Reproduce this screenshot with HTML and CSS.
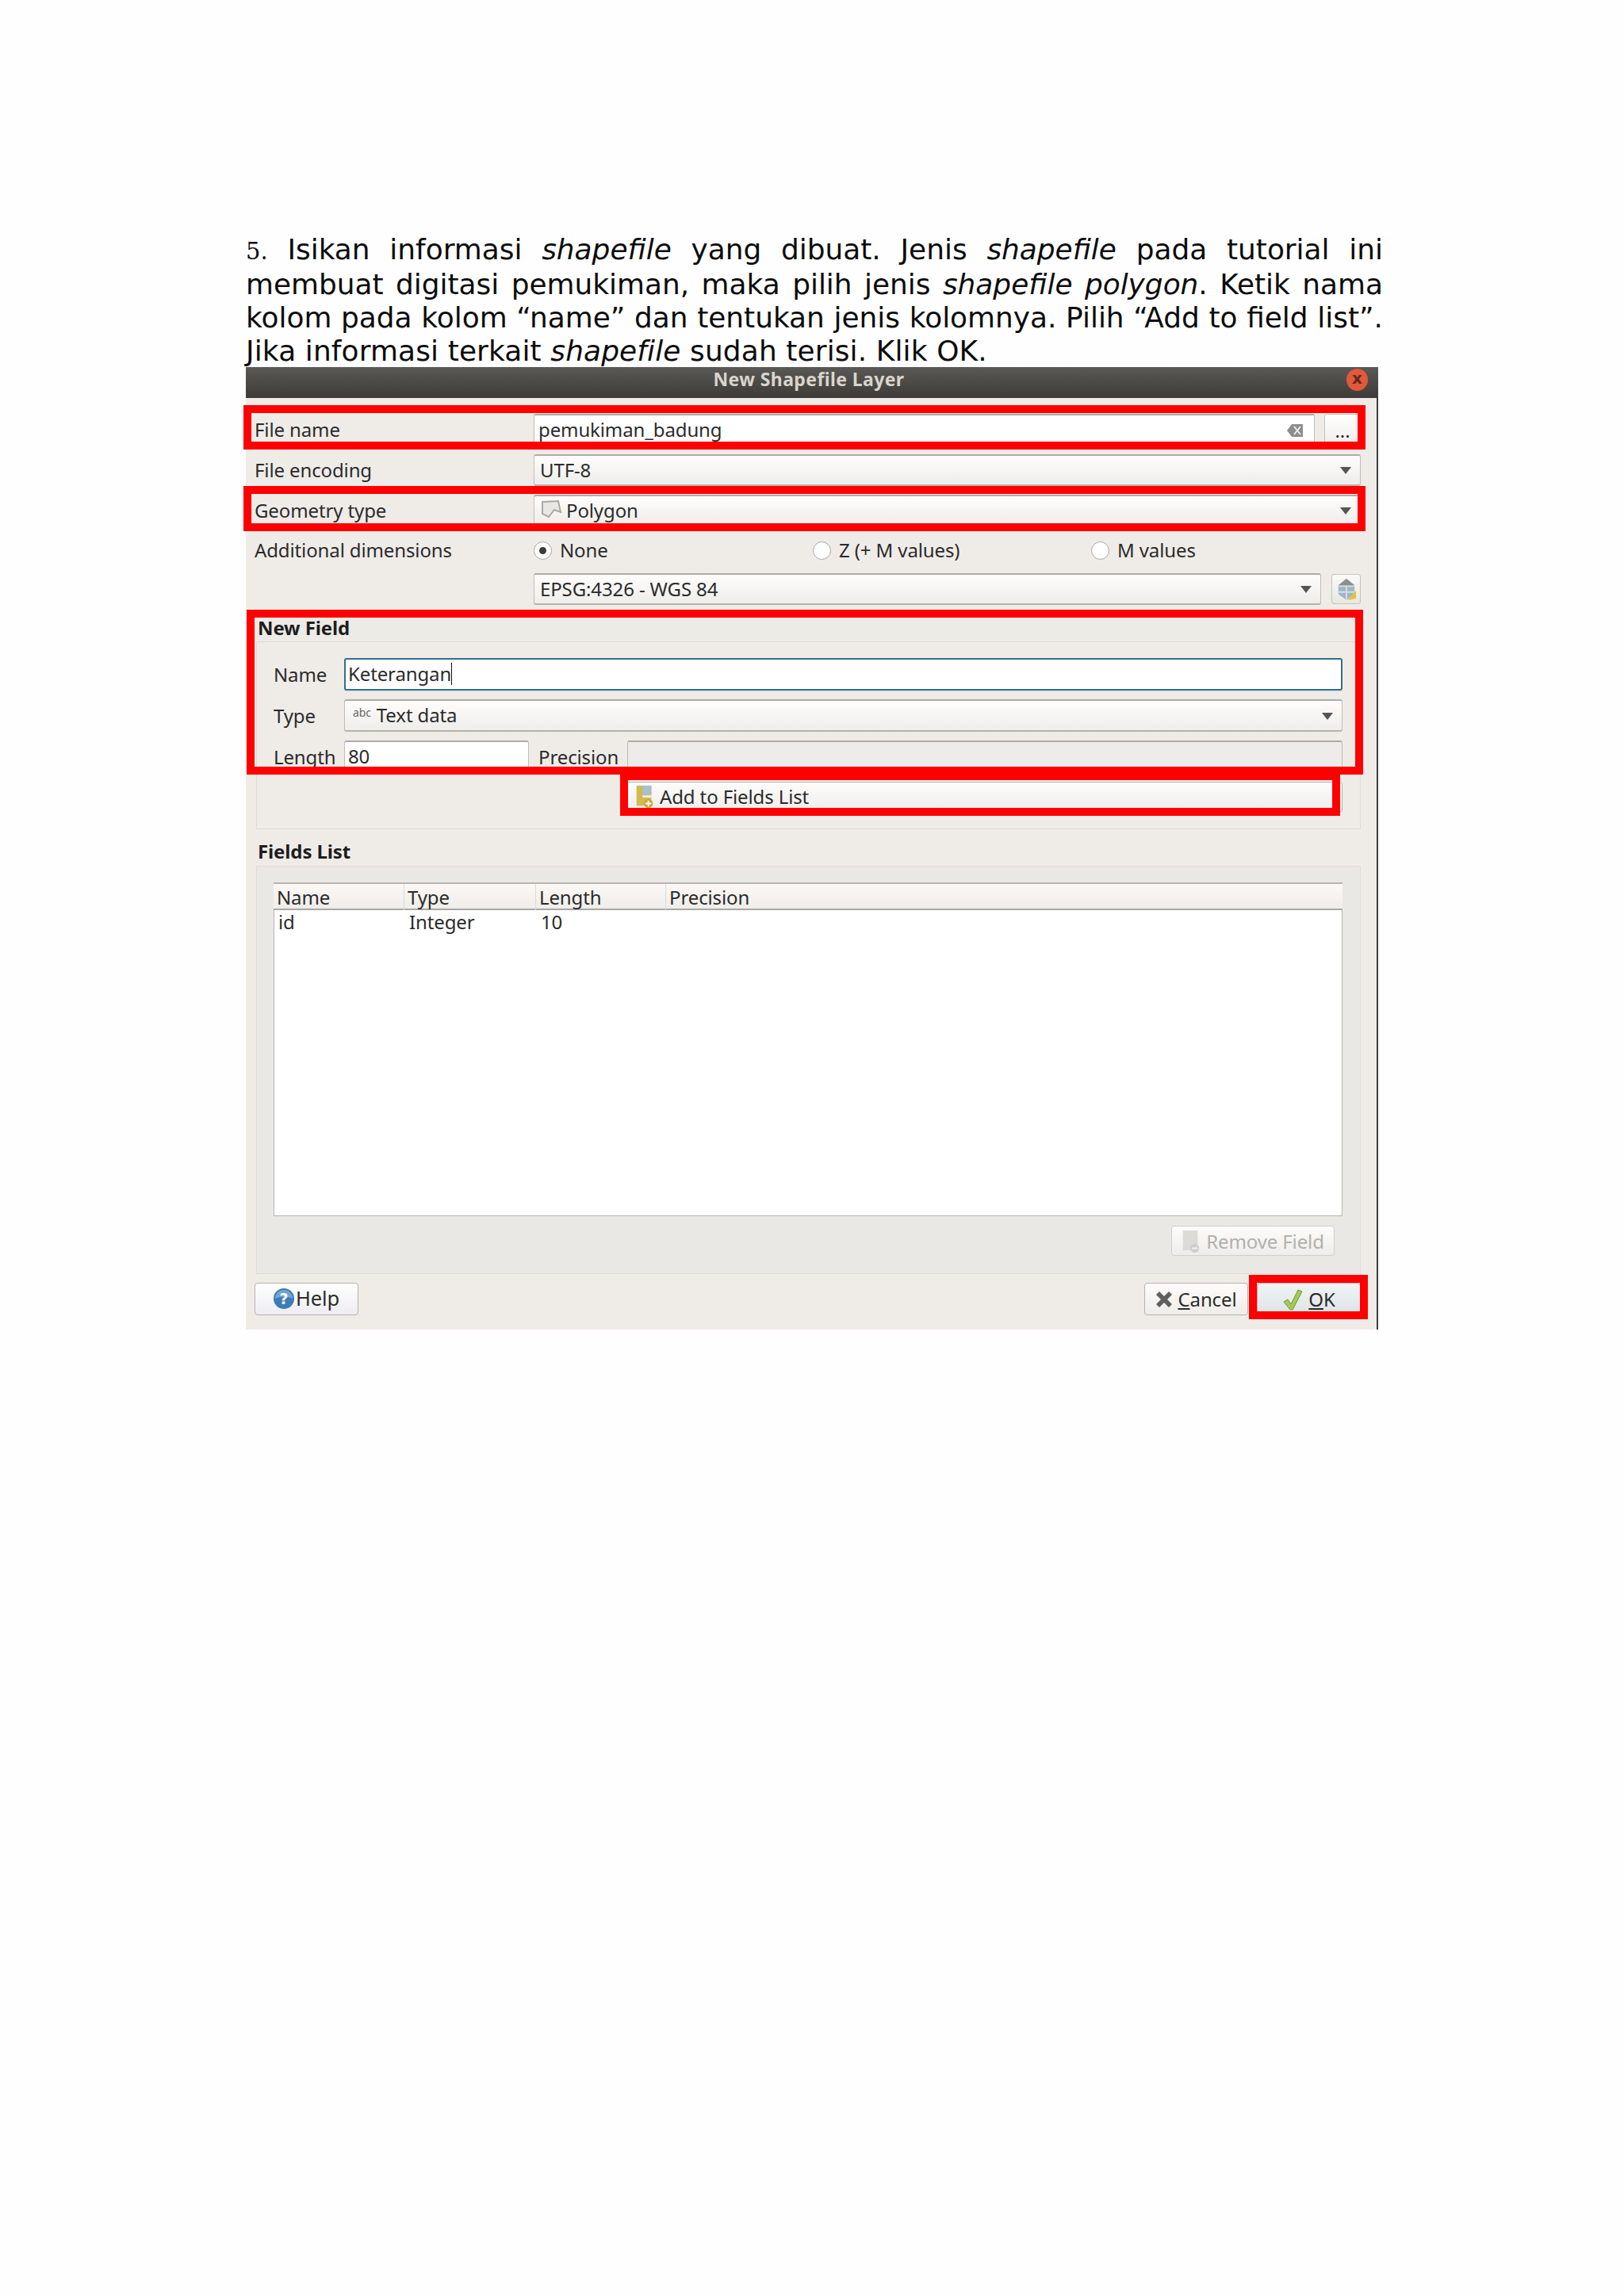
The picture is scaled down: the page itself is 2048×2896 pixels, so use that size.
FILE: index.html
```html
<!DOCTYPE html>
<html lang="id">
<head>
<meta charset="utf-8">
<title>New Shapefile Layer</title>
<link rel="stylesheet" href="styles.css">
</head>
<body>
<main class="page">
  <p class="step"><span class="num">5.</span> Isikan informasi <em>shapefile</em> yang dibuat. Jenis <em>shapefile</em> pada tutorial ini membuat digitasi pemukiman, maka pilih jenis <em>shapefile polygon</em>. Ketik nama kolom pada kolom “name” dan tentukan jenis kolomnya. Pilih “Add to field list”. <span class="last">Jika informasi terkait <em>shapefile</em> sudah terisi. Klik OK.</span></p>

  <section class="dialog">
    <header class="titlebar">
      <span class="title">New Shapefile Layer</span>
      <span class="close">x</span>
    </header>
    <div class="body">
      <div class="row first">
        <label class="lab">File name</label>
        <div class="input file">pemukiman_badung
          <svg class="clear" viewBox="0 0 22 18"><path d="M7 1h14v16H7L1 9z" fill="#8d8d8d"/><path d="M10 4l8 10M18 4l-8 10" stroke="#eee" stroke-width="2"/></svg>
        </div>
        <div class="dots">...</div>
      </div>
      <div class="row">
        <label class="lab">File encoding</label>
        <div class="combo">UTF-8<i class="arrow"></i></div>
      </div>
      <div class="row">
        <label class="lab">Geometry type</label>
        <div class="combo">
          <svg class="poly" viewBox="0 0 28 24"><path d="M3 3l20-1 3 14-8-3-7 9-8-4z" fill="#e9e7e3" stroke="#a9a9a5" stroke-width="2"/></svg>
          Polygon<i class="arrow"></i>
        </div>
      </div>
      <div class="row radios">
        <label class="lab">Additional dimensions</label>
        <div class="radio-set">
          <span class="radio-item none"><i class="radio on"></i>None</span>
          <span class="radio-item zm"><i class="radio"></i>Z (+ M values)</span>
          <span class="radio-item"><i class="radio"></i>M values</span>
        </div>
      </div>
      <div class="row crs">
        <span class="lab"></span>
        <div class="combo">EPSG:4326 - WGS 84<i class="arrow"></i></div>
        <div class="globe-btn">
          <svg viewBox="0 0 28 32"><path d="M14 2l11 9v12l-11 8-11-8V11z" fill="#9db7c6"/><path d="M3 12h22M3 20h22M14 2v29" stroke="#d7dde0" stroke-width="2"/><path d="M14 2l11 9H3z" fill="#8b8f8e"/><path d="M16 31l11-13v11z" fill="#e2c531"/></svg>
        </div>
      </div>

      <h2 class="group-title new">New Field</h2>
      <div class="group new-box">
        <div class="frow">
          <label class="flab">Name</label>
          <div class="input focus">Keterangan<i class="caret"></i></div>
        </div>
        <div class="frow">
          <label class="flab">Type</label>
          <div class="combo"><span class="abc">abc</span>Text data<i class="arrow"></i></div>
        </div>
        <div class="frow">
          <label class="flab">Length</label>
          <div class="input length">80</div>
          <label class="plab">Precision</label>
          <div class="input off"></div>
        </div>
        <div class="add-row">
          <button class="btn add">
            <svg class="field-ico" viewBox="0 0 24 32"><path d="M1 1h20v27H1z" fill="#d3b94f"/><path d="M9 1h12v12H9z" fill="#a6bfd1"/><path d="M9 14h12v3H9z" fill="#eee"/><circle cx="17" cy="25" r="6" fill="#c9a92c"/><path d="M17 21v8M13 25h8" stroke="#fff" stroke-width="2"/></svg>
            Add to Fields List
          </button>
        </div>
      </div>

      <h2 class="group-title fields">Fields List</h2>
      <div class="group list-box">
        <div class="tree">
          <div class="thead">
            <span>Name</span><span>Type</span><span>Length</span><span>Precision</span>
          </div>
          <div class="trow">
            <span>id</span><span>Integer</span><span>10</span><span></span>
          </div>
        </div>
        <div class="remove-row">
          <button class="btn remove">
            <svg class="field-ico" viewBox="0 0 24 32"><path d="M1 1h20v27H1z" fill="#dcdbd8"/><circle cx="17" cy="25" r="6" fill="#cfcecb"/><path d="M13 25h8" stroke="#f4f4f4" stroke-width="2"/></svg>
            Remove Field
          </button>
        </div>
      </div>

      <div class="footer">
        <button class="btn help">
          <svg class="help-ico" viewBox="0 0 26 26"><circle cx="13" cy="13" r="13" fill="#3a7db8"/><path d="M2 13a11 11 0 0 1 22 0c-6-3-15-3-22 0z" fill="#74a5d0"/><text x="13" y="20" class="qmark">?</text></svg>Help
        </button>
        <div class="footer-right">
          <button class="btn cancel">
            <svg class="x-ico" viewBox="0 0 22 22"><path d="M5 1l6 6 6-6 4 4-6 6 6 6-4 4-6-6-6 6-4-4 6-6-6-6z" fill="#5f5f5c"/></svg>
            <span><u>C</u>ancel</span>
          </button>
          <button class="btn ok">
            <svg class="check-ico" viewBox="0 0 26 28"><path d="M2 17l5-3 4 6L20 2l5 2-12 23h-3z" fill="#a4c956" stroke="#6e9a2c"/></svg>
            <span><u>O</u>K</span>
          </button>
        </div>
      </div>
    </div>

    <div class="mark m-file"></div>
    <div class="mark m-geom"></div>
    <div class="mark m-field"></div>
    <div class="mark m-add"></div>
    <div class="mark m-ok"></div>
  </section>
</main>
</body>
</html>
```
FILE: styles.css
```css
* { box-sizing: border-box; }
html, body { margin: 0; padding: 0; background: #fefefe; }
body { width: 2048px; height: 2896px; overflow: hidden; }
.page { padding: 294px 0 0 310px; width: 1744px; }

.step {
  margin: 0;
  width: 1434px;
  height: 169px;
  font: 35.9px/42px "DejaVu Sans", sans-serif;
  color: #0c0c0c;
  text-align: justify;
}
.num { font-family: "DejaVu Serif", serif; font-size: 29px; }
.step em { font-style: oblique; }
.last { letter-spacing: .14px; }

.dialog {
  position: relative;
  width: 1428px;
  background: #efece8;
  border-right: 2px solid #3c3c3c;
  font: 24px/1 "Noto Sans", sans-serif;
  letter-spacing: -.12px;
  color: #2b2b2b;
}
.titlebar {
  position: relative;
  height: 39px;
  background: linear-gradient(#5a5955, #3c3b37);
  display: flex;
  justify-content: center;
  margin-right: -2px;
}
.title {
  font: bold 23px/30px "Noto Sans", sans-serif;
  color: #d9d5cd;
  letter-spacing: .4px;
  margin-right: 8px;
}
.close {
  position: absolute;
  right: 13px;
  top: 2px;
  width: 27px;
  height: 28px;
  border-radius: 50%;
  background: #e2583a;
  color: #5d2a1c;
  font: bold 20px/24px "DejaVu Sans", sans-serif;
  text-align: center;
}

.body { padding: 20px 20px 18px 11px; display: flex; flex-direction: column; }
.row { display: flex; align-items: center; height: 40px; margin-bottom: 11px; }
.lab { flex: 0 0 352px; }
.radios { height: 38px; margin-bottom: 10px; }
.crs { margin-bottom: 16px; gap: 13px; }
.crs .lab { margin-right: -13px; }
.crs .combo { flex: 1; }

.input, .combo {
  flex: 1;
  height: 100%;
  position: relative;
  display: flex;
  align-items: center;
  padding: 0 0 2px 5px;
  border: 1px solid #c0bdb8;
  border-top: 2px solid #aeaba6;
  border-radius: 3px;
}
.input { background: #fff; }
.combo { padding: 0 0 0 7px; background: linear-gradient(#fffdfc, #eeedea); border-bottom: 2px solid #b5b3ae; }
.frow .combo { padding-bottom: 2px; }
.file { flex: 0 0 985px; }
.dots {
  margin-left: 12px;
  flex: 1;
  height: 100%;
  border: 1px solid #c6c3be;
  border-radius: 3px;
  background: linear-gradient(#fff, #f0eeeb);
  text-align: center;
  line-height: 40px;
  font-size: 24px;
}
.clear { position: absolute; right: 13px; top: 10px; width: 22px; height: 18px; }
.arrow {
  position: absolute;
  right: 11px;
  top: 50%;
  margin-top: -4px;
  border: 7px solid transparent;
  border-top: 9px solid #555;
  border-bottom: 0;
}
.poly { width: 28px; height: 24px; margin: -4px 5px 0 0; }

.radio-set { display: flex; }
.radio-item { display: flex; align-items: center; width: 350px; padding-left: 0; }
.radio-item.none { width: 352px; }
.radio-item.zm { width: 351px; }
.radio {
  width: 23px;
  height: 23px;
  margin-right: 10px;
  border-radius: 50%;
  background: #fff;
  border: 1px solid #a9a7a2;
  position: relative;
}
.on::after {
  content: "";
  position: absolute;
  left: 6px;
  top: 6px;
  width: 9px;
  height: 9px;
  border-radius: 50%;
  background: #3b3b3b;
}
.globe-btn {
  flex: 0 0 37px;
  height: 38px;
  border: 1px solid #c6c3be;
  border-radius: 3px;
  background: linear-gradient(#fbfaf8, #e9e7e3);
  display: flex;
  justify-content: center;
  align-items: center;
}
.globe-btn svg { width: 26px; height: 32px; }

.group-title {
  margin: 0;
  font: bold 24px/26px "Noto Sans", sans-serif;
  color: #1d1d1d;
  padding-left: 4px;
}
.group-title.new { height: 30px; background: #ecebe5; }
.group-title.fields { height: 46px; padding: 15px 0 0 4px; }
.group {
  margin: 0 0 0 2px;
  border: 1px solid #dedcd7;
  padding: 20px 22px 0 21px;
}
.new-box { height: 237px; }
.list-box { height: 515px; background: #eae8e5; padding-bottom: 22px; }

.frow { display: flex; align-items: center; height: 41px; margin-bottom: 11px; }
.flab { flex: 0 0 89px; }
.plab { flex: 0 0 124px; padding-left: 12px; }
.length { flex: 0 0 233px; }
.off { background: #eeecea; }
.focus { border: 2px solid #356f8b; box-shadow: 0 2px 0 #d9e6ee; padding-left: 3px; }
.length { padding-left: 4px; }
.caret { width: 1px; height: 28px; background: #111; }

.add-row { display: flex; justify-content: flex-end; }
.btn {
  font: inherit;
  letter-spacing: inherit;
  color: inherit;
  display: flex;
  align-items: center;
  justify-content: center;
  border: 1px solid #b5b3ae;
  border-radius: 4px;
  background: linear-gradient(#fdfcfb, #efedea);
  padding: 0;
}
.add { width: 908px; height: 39px; justify-content: flex-start; padding: 0 0 2px 15px; }
.field-ico { width: 24px; height: 30px; margin-right: 7px; }

.tree {
  height: 421px;
  background: #fff;
  border: 1px solid #b7b5b1;
  border-top: 0;
}
.thead, .trow { display: grid; grid-template-columns: 165px 166px 164px 1fr; }
.thead {
  height: 35px;
  margin: 0 -1px;
  background: linear-gradient(#fbf8f6, #efedea);
  border-top: 2px solid #b7b5b1;
  border-bottom: 2px solid #a9a7a3;
  align-items: center;
}
.thead span { padding-left: 4px; height: 100%; line-height: 33px; border-right: 1px solid #dcdad6; }
.thead span:last-child { border-right: 0; }
.trow { padding-top: 3px; line-height: 24px; }
.trow span { padding-left: 5px; }

.remove-row { display: flex; justify-content: flex-end; margin: 12px 10px 0 0; }
.remove { width: 206px; height: 38px; color: #b1b0ad; border-color: #d2d0cc; padding-top: 2px; }

.footer { display: flex; justify-content: space-between; margin-top: 11px; height: 41px; }
.footer .btn { height: 41px; width: 131px; }
.footer-right { display: flex; gap: 11px; }
.help { font-size: 25.5px; background: linear-gradient(#fff, #edecf0); padding-bottom: 2px; }
.help-ico { width: 26px; height: 26px; margin-right: 2px; }
.qmark { font: bold 19px "DejaVu Sans", sans-serif; fill: #fff; text-anchor: middle; }
.x-ico { width: 22px; height: 22px; margin-right: 6px; }
.check-ico { width: 26px; height: 28px; margin-right: 7px; }
.footer .ok { background: linear-gradient(#f1f4f5, #dde3e6); }

.abc { font-size: 14px; color: #666; margin: -6px 7px 0 3px; }

.mark { position: absolute; border: 10px solid #fe0000; }
.m-file { left: -3px; top: 48px; width: 1415px; height: 56px; }
.m-geom { left: -3px; top: 150px; width: 1415px; height: 57px; }
.m-field { left: 1px; top: 306px; width: 1408px; height: 208px; }
.m-add { left: 472px; top: 511px; width: 908px; height: 55px; }
.m-ok { left: 1265px; top: 1145px; width: 150px; height: 56px; }
```
